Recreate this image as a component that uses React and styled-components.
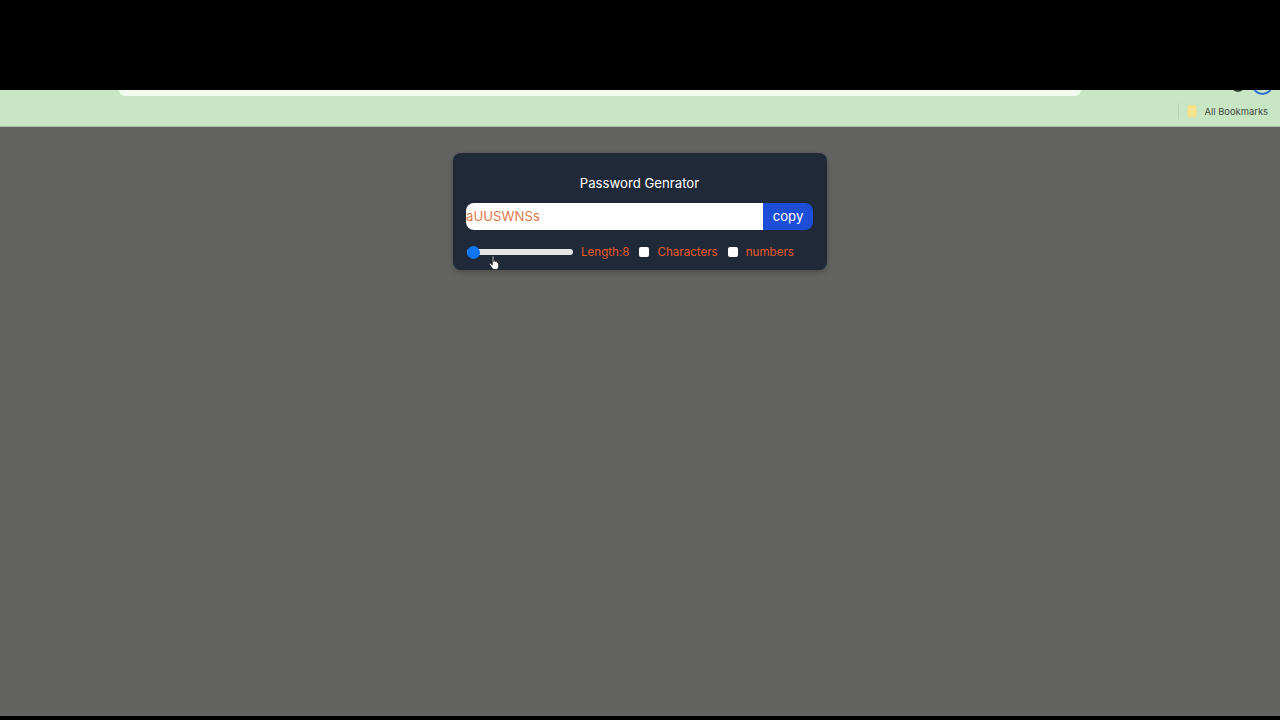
import styled, { createGlobalStyle } from 'styled-components';

const GlobalStyle = createGlobalStyle`
  html, body {
    margin: 0;
    height: 100%;
    background: #000;
  }
  body {
    font-family: Inter, "Liberation Sans", sans-serif;
  }
`;

const App = () => {
  return (
    <>
      <GlobalStyle />
      <Page>
        <BrowserBar>
          <Omnibox />
          <ProfileIcons>
            <DarkDot />
            <BlueRing />
          </ProfileIcons>
          <Bookmarks>
            <Divider />
            <FolderIcon viewBox="0 0 10 14">
              <rect x="0.5" y="1" width="9" height="12" rx="2" fill="#f4e28c" />
            </FolderIcon>
            <BookmarkText>All Bookmarks</BookmarkText>
          </Bookmarks>
        </BrowserBar>
        <Content>
          <Card>
            <Title>Password Genrator</Title>
            <InputRow>
              <PasswordInput readOnly value="aUUSWNSs" />
              <CopyButton>copy</CopyButton>
            </InputRow>
            <Controls>
              <RangeInput type="range" min="8" max="100" defaultValue="8" />
              <ControlLabel>Length:8</ControlLabel>
              <CheckGroup>
                <CheckBox type="checkbox" />
                <ControlLabel>Characters</ControlLabel>
              </CheckGroup>
              <CheckGroup>
                <CheckBox type="checkbox" />
                <ControlLabel>numbers</ControlLabel>
              </CheckGroup>
            </Controls>
            <HandCursor viewBox="0.5 1 10.5 14.5">
              <path
                d="M3.6 1.6c0-.9 1.5-.9 1.5 0v5l.2-1c.3-.7 1.3-.6 1.4.1l.1.9c.2-.7 1.2-.7 1.4 0l.1.9c.3-.6 1.3-.5 1.4.2v3.4c0 1.5-.9 2.9-2.4 2.9H5.4c-1 0-1.6-.5-2.1-1.3L1 9.2c-.5-.8.5-1.6 1.2-.9l1.4 1.4z"
                fill="#fff"
                stroke="#111"
                strokeWidth="0.7"
              />
            </HandCursor>
          </Card>
        </Content>
      </Page>
    </>
  );
};

export default App;

const Page = styled.div`
  display: flex;
  flex-direction: column;
  width: 1280px;
  height: 626px;
  margin-top: 90px;
`;
const BrowserBar = styled.div`
  position: relative;
  height: 37px;
  flex-shrink: 0;
  display: flex;
  align-items: flex-end;
  justify-content: flex-end;
  background: #c8e6c3;
  border-bottom: 1px solid #a9c2a6;
  box-sizing: border-box;
`;
const Omnibox = styled.div`
  position: absolute;
  top: 0;
  left: 119px;
  width: 962px;
  height: 6px;
  background: #f3fbf1;
  border-radius: 0 0 10px 10px;
`;
const ProfileIcons = styled.div`
  position: absolute;
  top: 0;
  right: 7px;
  width: 42px;
  height: 5px;
  overflow: hidden;
`;
const DarkDot = styled.div`
  position: absolute;
  left: 0;
  top: -12px;
  width: 14px;
  height: 14px;
  border-radius: 50%;
  background: #3b4a3c;
`;
const BlueRing = styled.div`
  position: absolute;
  right: 0;
  top: -16px;
  width: 17px;
  height: 17px;
  border-radius: 50%;
  border: 2px solid #2f6fd0;
`;
const Bookmarks = styled.div`
  display: flex;
  align-items: center;
  height: 30px;
  padding-right: 12px;
`;
const Divider = styled.div`
  width: 1px;
  height: 16px;
  background: #b5d1b1;
  margin-right: 8px;
`;
const FolderIcon = styled.svg`
  width: 10px;
  height: 14px;
  margin-right: 8px;
`;
const BookmarkText = styled.span`
  font-size: 9.4px;
  color: #3d4a3d;
`;
const Content = styled.main`
  flex: 1;
  background: #636361;
  display: flex;
  justify-content: center;
  align-items: flex-start;
  padding-top: 26px;
`;
const Card = styled.section`
  position: relative;
  width: 374px;
  height: 117px;
  box-sizing: border-box;
  padding: 0 14px 0 13px;
  background: #1f2937;
  border-radius: 8px;
  box-shadow: 0 2px 6px rgba(0, 0, 0, 0.25);
`;
const Title = styled.h1`
  margin: 0;
  padding: 21px 0 0;
  height: 50px;
  box-sizing: border-box;
  font-size: 13.2px;
  font-weight: 400;
  line-height: 18px;
  text-align: center;
  color: #fff;
`;
const InputRow = styled.div`
  display: flex;
  height: 27px;
  border-radius: 8px;
  overflow: hidden;
`;
const PasswordInput = styled.input`
  flex: 1;
  min-width: 0;
  border: 0;
  outline: 0;
  padding: 0 0 1px;
  background: #fff;
  font-family: inherit;
  font-size: 13.2px;
  color: #e0794a;
`;
const CopyButton = styled.button`
  width: 50px;
  border: 0;
  padding: 0 0 1px;
  background: #1d4ed8;
  color: #fff;
  font-family: inherit;
  font-size: 13.2px;
`;
const Controls = styled.div`
  display: flex;
  align-items: center;
  margin-top: 14px;
  height: 16px;
  font-size: 11.6px;
`;
const RangeInput = styled.input`
  appearance: none;
  width: 106px;
  height: 6px;
  margin: 0 8px 0 1px;
  border-radius: 3px;
  background: #e4e6e6;

  &::-webkit-slider-thumb {
    appearance: none;
    width: 13px;
    height: 13px;
    border-radius: 50%;
    background: #0f75f0;
  }
`;
const ControlLabel = styled.span`
  color: #ea5a2a;
`;
const CheckGroup = styled.label`
  display: flex;
  align-items: center;
  margin-left: 10px;
`;
const CheckBox = styled.input`
  appearance: none;
  width: 10px;
  height: 10px;
  margin: 0 8px 0 0;
  border-radius: 2px;
  background: #fff;
`;
const HandCursor = styled.svg`
  position: absolute;
  left: 36px;
  top: 103px;
  width: 11px;
  height: 15px;
`;
